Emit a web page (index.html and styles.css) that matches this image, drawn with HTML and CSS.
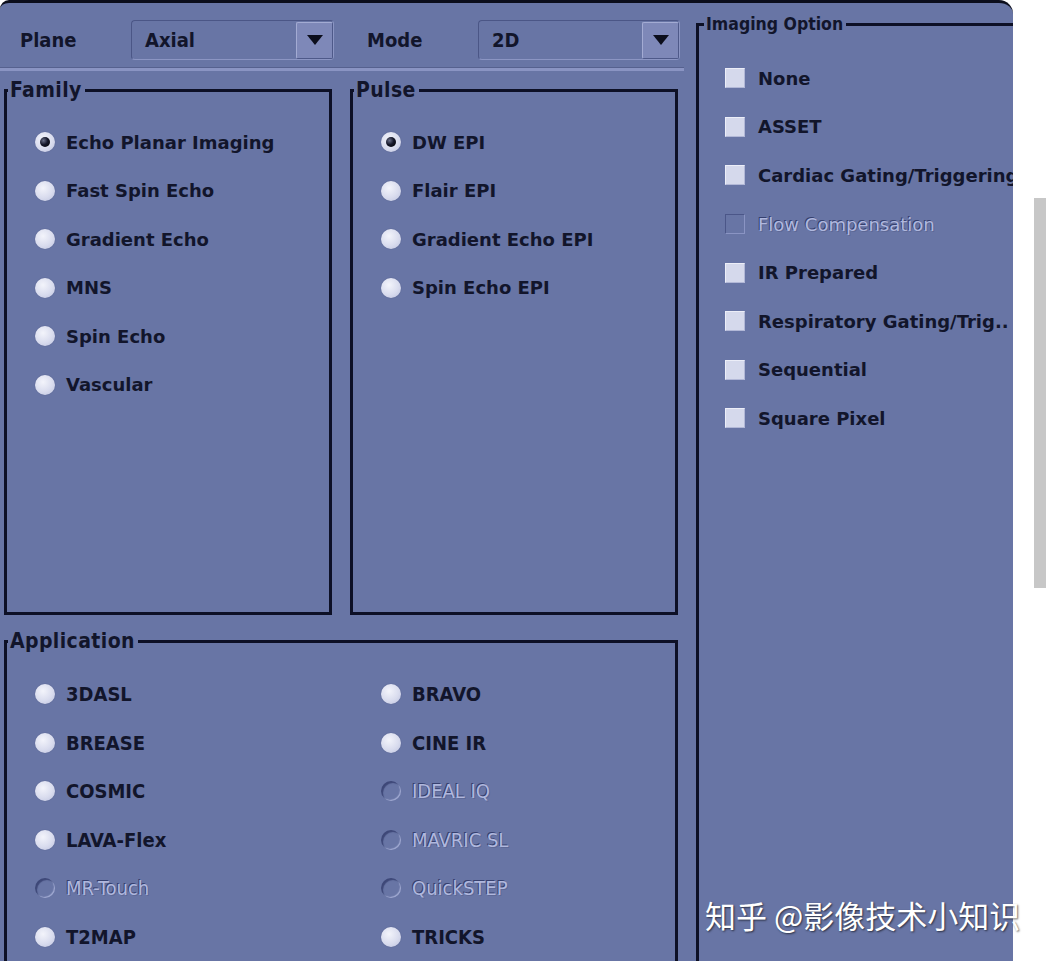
FILE: index.html
```html
<!DOCTYPE html>
<html lang="en">
<head>
    <meta charset="UTF-8">
    <meta name="viewport" content="width=device-width, initial-scale=1.0">
    <title>Protocol Setup</title>
    <link rel="stylesheet" href="styles.css">
</head>
<body>
    <div class="screen">
        <div class="panel">
            <div class="left-column">
                <div class="toolbar">
                    <span class="top-label">Plane</span>
                    <div class="select"><span>Axial</span><span class="arrow"></span></div>
                    <span class="top-label">Mode</span>
                    <div class="select"><span>2D</span><span class="arrow"></span></div>
                </div>

                <div class="group-row">
                    <fieldset class="group family">
                        <legend>Family</legend>
                        <div class="items">
                            <div class="item"><span class="radio checked"></span>Echo Planar Imaging</div>
                            <div class="item"><span class="radio"></span>Fast Spin Echo</div>
                            <div class="item"><span class="radio"></span>Gradient Echo</div>
                            <div class="item"><span class="radio"></span>MNS</div>
                            <div class="item"><span class="radio"></span>Spin Echo</div>
                            <div class="item"><span class="radio"></span>Vascular</div>
                        </div>
                    </fieldset>
                    <fieldset class="group pulse">
                        <legend>Pulse</legend>
                        <div class="items">
                            <div class="item"><span class="radio checked"></span>DW EPI</div>
                            <div class="item"><span class="radio"></span>Flair EPI</div>
                            <div class="item"><span class="radio"></span>Gradient Echo EPI</div>
                            <div class="item"><span class="radio"></span>Spin Echo EPI</div>
                        </div>
                    </fieldset>
                </div>

                <fieldset class="group application">
                    <legend>Application</legend>
                    <div class="items app-grid">
                        <div class="item"><span class="radio"></span>3DASL</div>
                        <div class="item"><span class="radio"></span>BRAVO</div>
                        <div class="item"><span class="radio"></span>BREASE</div>
                        <div class="item"><span class="radio"></span>CINE IR</div>
                        <div class="item"><span class="radio"></span>COSMIC</div>
                        <div class="item disabled"><span class="radio"></span>IDEAL IQ</div>
                        <div class="item"><span class="radio"></span>LAVA-Flex</div>
                        <div class="item disabled"><span class="radio"></span>MAVRIC SL</div>
                        <div class="item disabled"><span class="radio"></span>MR-Touch</div>
                        <div class="item disabled"><span class="radio"></span>QuickSTEP</div>
                        <div class="item"><span class="radio"></span>T2MAP</div>
                        <div class="item"><span class="radio"></span>TRICKS</div>
                    </div>
                </fieldset>
            </div>

            <fieldset class="group options">
                <legend>Imaging Option</legend>
                <div class="items">
                    <div class="item"><span class="check"></span>None</div>
                    <div class="item"><span class="check"></span>ASSET</div>
                    <div class="item"><span class="check"></span>Cardiac Gating/Triggering</div>
                    <div class="item disabled"><span class="check"></span>Flow Compensation</div>
                    <div class="item"><span class="check"></span>IR Prepared</div>
                    <div class="item"><span class="check"></span>Respiratory Gating/Trig..</div>
                    <div class="item"><span class="check"></span>Sequential</div>
                    <div class="item"><span class="check"></span>Square Pixel</div>
                </div>
            </fieldset>
        </div>

        <div class="scrollbar"></div>

        <div class="watermark">知乎 @影像技术小知识</div>
    </div>
</body>
</html>
```

FILE: styles.css
```css
body {
    margin: 0;
    padding: 0;
    background-color: #ffffff;
    font-family: "DejaVu Sans", sans-serif;
    color: #12152b;
}

.screen {
    position: relative;
    display: flex;
    align-items: flex-start;
    height: 961px;
    overflow: hidden;
}

/* main blue console panel */
.panel {
    display: flex;
    flex: none;
    width: 1013px;
    height: 1000px;
    background-color: #6875a5;
    border-top: 3px solid #0c0e1c;
    border-radius: 9px 14px 0 0;
    overflow: hidden;
    box-sizing: border-box;
}

.left-column {
    flex: none;
    width: 684px;
}

/* Plane / Mode bar */
.toolbar {
    display: flex;
    align-items: center;
    padding: 17px 0 8px 20px;
    border-bottom: 3px solid #8a94c3;
    box-shadow: inset 0 -1px 0 #56618f;
}

.top-label {
    width: 111px;
    font-family: "DejaVu Sans Condensed", "DejaVu Sans", sans-serif;
    font-weight: bold;
    font-size: 20px;
}

.select {
    display: flex;
    align-items: center;
    justify-content: space-between;
    width: 203px;
    height: 40px;
    margin-right: 33px;
    padding-left: 13px;
    box-sizing: border-box;
    border: 1px solid;
    border-color: #4b5686 #8b95c3 #8b95c3 #4b5686;
    border-radius: 4px;
    font-family: "DejaVu Sans Condensed", "DejaVu Sans", sans-serif;
    font-weight: bold;
    font-size: 20px;
}

.select:last-child {
    width: 202px;
    margin-right: 0;
}

.arrow {
    display: flex;
    align-items: center;
    justify-content: center;
    width: 37px;
    height: 37px;
    box-sizing: border-box;
    background-color: #7e88b8;
    border: 1px solid;
    border-color: #a3abd3 #4e5989 #4e5989 #a3abd3;
    border-radius: 2px;
}

.arrow::after {
    content: "";
    border-left: 8px solid transparent;
    border-right: 8px solid transparent;
    border-top: 10px solid #0c0e1c;
}

/* group boxes */
.group {
    margin: 0;
    padding: 0;
    border: 3px solid #0d1026;
    box-sizing: border-box;
    min-width: 0;
}

.group legend {
    margin-left: 1px;
    padding: 0 3px 0 2px;
    line-height: 20px;
    font-family: "DejaVu Sans Condensed", "DejaVu Sans", sans-serif;
    font-weight: bold;
    font-size: 21px;
    letter-spacing: 0.4px;
}

.group-row {
    display: flex;
    margin: 9px 0 0 4px;
    gap: 18px;
}

.family,
.pulse {
    width: 328px;
    height: 535px;
}

.application {
    width: 674px;
    height: 400px;
    margin: 16px 0 0 4px;
}

.options {
    flex: none;
    width: 360px;
    height: 1000px;
    margin: 11px 0 0 12px;
}

.options legend {
    margin-left: 5px;
    font-size: 17.5px;
    letter-spacing: 0;
}

.items {
    padding: 18px 0 0 28px;
}

.item {
    display: flex;
    align-items: center;
    gap: 11px;
    height: 48.5px;
    font-weight: bold;
    font-size: 18px;
    white-space: nowrap;
}

.app-grid {
    display: grid;
    grid-template-columns: 346px 1fr;
    padding-top: 19px;
}

.app-grid .item {
    font-family: "DejaVu Sans Condensed", "DejaVu Sans", sans-serif;
    font-size: 20px;
}

.options .items {
    padding: 20px 0 0 26px;
}

.options .item {
    gap: 13px;
    height: 48.6px;
}

/* radio buttons */
.radio {
    position: relative;
    flex: none;
    width: 20px;
    height: 20px;
    border-radius: 50%;
    background: radial-gradient(circle at 40% 35%, #f3f4fb 0, #d9dcee 55%, #bcc1de 100%);
    box-shadow: 0 0 1px rgba(30, 36, 70, 0.4);
}

.radio.checked::after {
    content: "";
    position: absolute;
    left: 5px;
    top: 5px;
    width: 10px;
    height: 10px;
    border-radius: 50%;
    background: radial-gradient(circle at 35% 35%, #6a6f88 0, #15172a 45%, #000000 100%);
}

.item.disabled {
    color: #b0b8de;
    font-weight: normal;
    text-shadow: -1px -1px 0 #36406e, 1px 1px 0 #5d6896;
}

.item.disabled .radio {
    background: none;
    box-shadow: inset 2px 2px 1px #3e4878, inset -1px -1px 1px #a2abd3;
}

/* check boxes */
.check {
    flex: none;
    width: 20px;
    height: 20px;
    box-sizing: border-box;
    background-color: #d5d9ec;
    border: 1px solid;
    border-color: #eceef8 #b2b8d7 #b2b8d7 #eceef8;
}

.item.disabled .check {
    background: none;
    border-color: #4b5688 #8a94c3 #8a94c3 #4b5688;
}

/* grey strip beside the panel */
.scrollbar {
    flex: none;
    width: 12px;
    height: 390px;
    margin: 198px 0 0 21px;
    background-color: #c7c7c7;
}

.watermark {
    position: absolute;
    left: 705px;
    top: 892px;
    font-family: "Noto Sans CJK SC", sans-serif;
    font-size: 31px;
    color: #ffffff;
    text-shadow: 1px 1px 2px rgba(0, 0, 0, 0.6);
    white-space: nowrap;
}
```
